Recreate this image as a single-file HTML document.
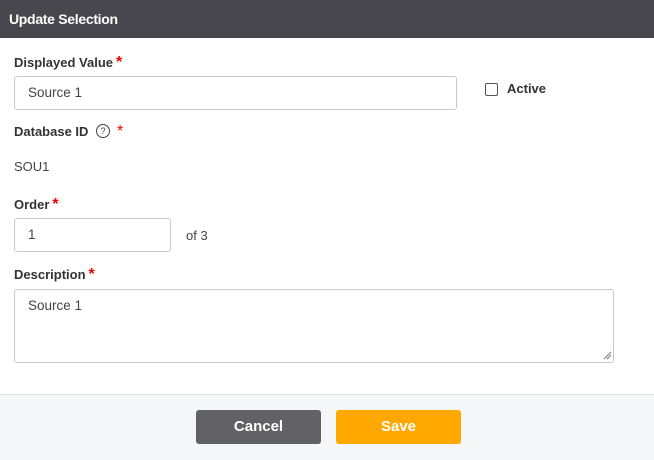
<!DOCTYPE html>
<html><head><style>
*{box-sizing:border-box;margin:0;padding:0}
body{width:654px;height:460px;background:#fff;font-family:"Liberation Sans",sans-serif;position:relative;overflow:hidden;color:#333}
.a{position:absolute}
.hdr{left:0;top:0;width:654px;height:38px;background:#47474d;color:#fff;font-weight:bold;font-size:14px;padding:11px 9px;letter-spacing:-0.3px}
.lbl{font-weight:bold;font-size:13px;color:#333}
.st{color:#e00;font-size:16px;margin-left:3px}
.in{border:1px solid #c8c8c8;border-radius:3px;font-size:13.5px;color:#444;padding:8px 13px;background:#fff}
.btn{width:125px;height:34px;border-radius:3px;color:#fff;font-weight:bold;font-size:15px;text-align:center;line-height:34px}
</style></head><body>
<div class="a hdr">Update Selection</div>
<div class="a lbl" style="left:14px;top:54px">Displayed Value<span class="st">*</span></div>
<div class="a in" style="left:14px;top:76px;width:443px;height:34px">Source 1</div>
<div class="a" style="left:485px;top:83px;width:13px;height:13px;border:1px solid #555;border-radius:2px"></div>
<div class="a lbl" style="left:507px;top:81px">Active</div>
<div class="a lbl" style="left:14px;top:124px">Database ID</div>
<div class="a" style="left:96px;top:124px;width:14px;height:14px;border:1px solid #444;border-radius:50%;font-size:9px;text-align:center;line-height:12px;color:#444">?</div>
<div class="a st" style="left:114px;top:123px">*</div>
<div class="a" style="left:14px;top:159px;font-size:13px;color:#444">SOU1</div>
<div class="a lbl" style="left:14px;top:196px">Order<span class="st">*</span></div>
<div class="a in" style="left:14px;top:218px;width:157px;height:34px">1</div>
<div class="a" style="left:186px;top:228px;font-size:13px;color:#444">of 3</div>
<div class="a lbl" style="left:14px;top:266px">Description<span class="st">*</span></div>
<div class="a in" style="left:14px;top:289px;width:600px;height:74px;padding-top:8px">Source 1</div>
<svg class="a" style="left:603px;top:351px" width="9" height="9"><path d="M1 8L8 1M4 8L8 4" stroke="#777" stroke-width="1"/></svg>
<div class="a" style="left:0;top:394px;width:654px;height:66px;background:#f5f6f8;border-top:1px solid #dde0e6"></div>
<div class="a btn" style="left:196px;top:410px;background:#626166">Cancel</div>
<div class="a btn" style="left:336px;top:410px;background:#ffa800">Save</div>
</body></html>
